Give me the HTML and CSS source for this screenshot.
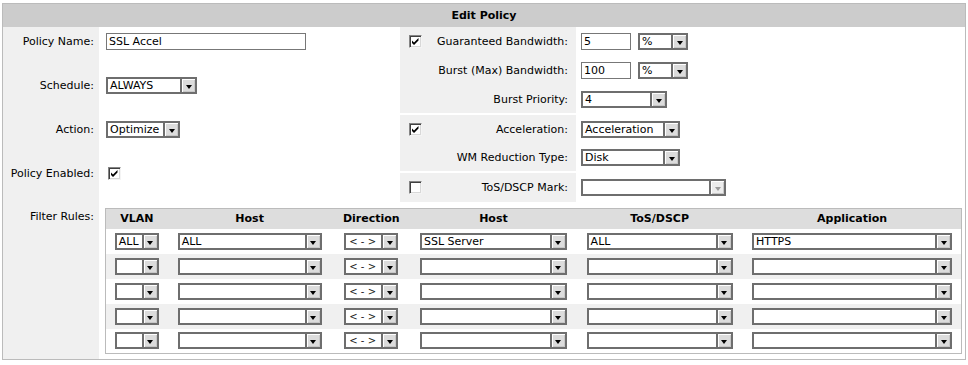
FILE: index.html
```html
<!DOCTYPE html>
<html>
<head>
<meta charset="utf-8">
<link rel="stylesheet" href="styles.css">
</head>
<body>
<div class="panel">
  <div class="title">Edit Policy</div>
  <div class="top">
    <div class="lbl">Policy Name:</div>
    <div class="ctl"><span class="inp w-name">SSL Accel</span></div>
    <div class="lbl">Schedule:</div>
    <div class="ctl"><span class="sel w-sched"><span class="val">ALWAYS</span><span class="btn"></span></span></div>
    <div class="lbl">Action:</div>
    <div class="ctl"><span class="sel w-action"><span class="val">Optimize</span><span class="btn"></span></span></div>
    <div class="lbl">Policy Enabled:</div>
    <div class="ctl"><span class="chk on ctl-chk"><svg viewBox="0 0 11 11" width="11" height="11"><path d="M2 4.5 L4 6.5 L8.5 2 V4.5 L4 9 L2 7 Z" fill="#000"/></svg></span></div>

    <div class="right">
      <div class="grp grp1">
        <div class="cbc"><span class="chk on"><svg viewBox="0 0 11 11" width="11" height="11"><path d="M2 4.5 L4 6.5 L8.5 2 V4.5 L4 9 L2 7 Z" fill="#000"/></svg></span></div>
        <div class="rl">Guaranteed Bandwidth:</div>
        <div class="rc"><span class="inp w-num">5</span><span class="sel w-unit"><span class="val">%</span><span class="btn"></span></span></div>
        <div class="cbc"></div>
        <div class="rl">Burst (Max) Bandwidth:</div>
        <div class="rc"><span class="inp w-num">100</span><span class="sel w-unit"><span class="val">%</span><span class="btn"></span></span></div>
        <div class="cbc"></div>
        <div class="rl">Burst Priority:</div>
        <div class="rc"><span class="sel w-prio"><span class="val">4</span><span class="btn"></span></span></div>
      </div>
      <div class="grp grp2">
        <div class="cbc"><span class="chk on"><svg viewBox="0 0 11 11" width="11" height="11"><path d="M2 4.5 L4 6.5 L8.5 2 V4.5 L4 9 L2 7 Z" fill="#000"/></svg></span></div>
        <div class="rl">Acceleration:</div>
        <div class="rc"><span class="sel w-acc"><span class="val">Acceleration</span><span class="btn"></span></span></div>
        <div class="cbc"></div>
        <div class="rl">WM Reduction Type:</div>
        <div class="rc"><span class="sel w-acc"><span class="val">Disk</span><span class="btn"></span></span></div>
      </div>
      <div class="grp grp3">
        <div class="cbc"><span class="chk"></span></div>
        <div class="rl">ToS/DSCP Mark:</div>
        <div class="rc"><span class="sel dis w-tos"><span class="val"></span><span class="btn"></span></span></div>
      </div>
    </div>
  </div>

  <div class="filter">
    <div class="lbl flbl">Filter Rules:</div>
    <div class="twrap">
      <table class="rules">
        <colgroup>
          <col class="c1"><col class="c2"><col class="c3"><col class="c4"><col class="c5"><col class="c6">
        </colgroup>
        <thead>
          <tr><th>VLAN</th><th>Host</th><th>Direction</th><th>Host</th><th>ToS/DSCP</th><th>Application</th></tr>
        </thead>
        <tbody>
          <tr>
            <td><span class="sel t1"><span class="val">ALL</span><span class="btn"></span></span></td>
            <td><span class="sel t2"><span class="val">ALL</span><span class="btn"></span></span></td>
            <td><span class="sel t3"><span class="val dir">&lt; - &gt;</span><span class="btn"></span></span></td>
            <td><span class="sel t4"><span class="val">SSL Server</span><span class="btn"></span></span></td>
            <td><span class="sel t5"><span class="val">ALL</span><span class="btn"></span></span></td>
            <td><span class="sel t6"><span class="val">HTTPS</span><span class="btn"></span></span></td>
          </tr>
          <tr class="alt">
            <td><span class="sel t1"><span class="val"></span><span class="btn"></span></span></td>
            <td><span class="sel t2"><span class="val"></span><span class="btn"></span></span></td>
            <td><span class="sel t3"><span class="val dir">&lt; - &gt;</span><span class="btn"></span></span></td>
            <td><span class="sel t4"><span class="val"></span><span class="btn"></span></span></td>
            <td><span class="sel t5"><span class="val"></span><span class="btn"></span></span></td>
            <td><span class="sel t6"><span class="val"></span><span class="btn"></span></span></td>
          </tr>
          <tr>
            <td><span class="sel t1"><span class="val"></span><span class="btn"></span></span></td>
            <td><span class="sel t2"><span class="val"></span><span class="btn"></span></span></td>
            <td><span class="sel t3"><span class="val dir">&lt; - &gt;</span><span class="btn"></span></span></td>
            <td><span class="sel t4"><span class="val"></span><span class="btn"></span></span></td>
            <td><span class="sel t5"><span class="val"></span><span class="btn"></span></span></td>
            <td><span class="sel t6"><span class="val"></span><span class="btn"></span></span></td>
          </tr>
          <tr class="alt">
            <td><span class="sel t1"><span class="val"></span><span class="btn"></span></span></td>
            <td><span class="sel t2"><span class="val"></span><span class="btn"></span></span></td>
            <td><span class="sel t3"><span class="val dir">&lt; - &gt;</span><span class="btn"></span></span></td>
            <td><span class="sel t4"><span class="val"></span><span class="btn"></span></span></td>
            <td><span class="sel t5"><span class="val"></span><span class="btn"></span></span></td>
            <td><span class="sel t6"><span class="val"></span><span class="btn"></span></span></td>
          </tr>
          <tr>
            <td><span class="sel t1"><span class="val"></span><span class="btn"></span></span></td>
            <td><span class="sel t2"><span class="val"></span><span class="btn"></span></span></td>
            <td><span class="sel t3"><span class="val dir">&lt; - &gt;</span><span class="btn"></span></span></td>
            <td><span class="sel t4"><span class="val"></span><span class="btn"></span></span></td>
            <td><span class="sel t5"><span class="val"></span><span class="btn"></span></span></td>
            <td><span class="sel t6"><span class="val"></span><span class="btn"></span></span></td>
          </tr>
        </tbody>
      </table>
    </div>
  </div>
</div>
</body>
</html>
```
FILE: styles.css
```css
* { box-sizing: border-box; }
body {
  margin: 0;
  background: #fff;
  color: #000;
  font-family: "DejaVu Sans", Verdana, sans-serif;
  font-size: 11px;
}
.panel {
  margin: 3px 0 0 2px;
  width: 964px;
  border: 1px solid #bbb;
}
.title {
  height: 23px;
  line-height: 23px;
  background: #ccc;
  font-weight: bold;
  text-align: center;
}
.top {
  display: grid;
  grid-template-columns: 96px 301px 1fr;
  grid-template-rows: repeat(4, 44px);
}
.lbl {
  background: #f0f0f0;
  text-align: right;
  padding: 6px 5px 0 0;
  line-height: 17px;
  white-space: nowrap;
}
.ctl {
  padding: 6px 0 0 7px;
  display: flex;
  align-items: flex-start;
}
.ctl-chk { margin: 2px 0 0 2px; }

.right {
  grid-column: 3;
  grid-row: 1 / 5;
  align-self: start;
  display: flex;
  flex-direction: column;
  gap: 2px;
}
.grp {
  display: grid;
  grid-template-columns: 30px 146px 1fr;
}
.grp1 { grid-template-rows: 29px 29px 28px; }
.grp2 { grid-template-rows: 28px 28px; }
.grp3 { grid-template-rows: 29px; }
.cbc {
  background: #f0f0f0;
  display: flex;
  align-items: center;
  padding-left: 9px;
}
.rl {
  background: #f0f0f0;
  display: flex;
  align-items: center;
  justify-content: flex-end;
  padding-right: 8px;
  white-space: nowrap;
}
.rc {
  display: flex;
  align-items: center;
  gap: 7px;
  padding-left: 5px;
}

/* checkbox */
.chk {
  display: inline-flex;
  align-items: center;
  justify-content: center;
  width: 13px;
  height: 13px;
  background: #fff;
  border: 1px solid;
  border-color: #858585 #f4f4f4 #f4f4f4 #858585;
  box-shadow: inset 1px 1px 0 #404040, inset -1px -1px 0 #d8d8d8;
}
.chk svg { display: block; }

/* text input */
.inp {
  display: inline-block;
  height: 17px;
  line-height: 15px;
  border: 1px solid #777;
  background: #fff;
  padding-left: 2px;
  white-space: nowrap;
  overflow: hidden;
}
.w-name { width: 200px; }
.w-num { width: 50px; }

/* select */
.sel {
  display: inline-flex;
  height: 17px;
  border: 2px solid #6e6e6e;
  background: #fff;
  vertical-align: middle;
  text-align: left;
}
.sel .val {
  flex: 1;
  min-width: 0;
  padding-left: 2px;
  line-height: 13px;
  white-space: nowrap;
  overflow: hidden;
}
.sel .val.dir { font-size: 10px; color: #222; padding-left: 3px; }
.sel .btn {
  width: 15px;
  flex: none;
  border-left: 2px solid #6e6e6e;
  background: #dcdcdc;
  box-shadow: inset 1px 1px 0 #fff, inset -1px -1px 0 #c8c8c8;
  display: flex;
  align-items: center;
  justify-content: center;
  padding-top: 3px;
}
.sel .btn::after {
  content: "";
  display: block;
  width: 0;
  height: 0;
  border-left: 3.5px solid transparent;
  border-right: 3.5px solid transparent;
  border-top: 4px solid #000;
}
.sel.dis .btn { background: #ececec; }
.sel.dis .btn::after { border-top-color: #9a9a9a; }

.w-sched { width: 91px; }
.w-action { width: 74px; }
.w-unit { width: 50px; }
.w-prio { width: 86px; }
.w-acc { width: 99px; }
.w-tos { width: 145px; }

/* filter rules */
.filter {
  display: grid;
  grid-template-columns: 96px 1fr;
}
.flbl { padding-top: 5px; }
.twrap { padding: 5px 3px 5px 6px; }
.rules {
  width: 100%;
  table-layout: fixed;
  border-collapse: collapse;
  border: 1px solid #bbb;
}
.c1 { width: 62px; }
.c2 { width: 164px; }
.c3 { width: 79px; }
.c4 { width: 165px; }
.c5 { width: 167px; }
.c6 { width: 218px; }
.rules th {
  height: 20px;
  padding: 0;
  background: #ddd;
  font-weight: bold;
  text-align: center;
}
.rules td {
  height: 25px;
  padding: 0;
  text-align: center;
  vertical-align: middle;
}
.rules tr.alt td { background: #f0f0f0; }
.t1 { width: 44px; }
.t2 { width: 144px; }
.t3 { width: 54px; }
.t4 { width: 147px; }
.t5 { width: 146px; }
.t6 { width: 200px; }
```
